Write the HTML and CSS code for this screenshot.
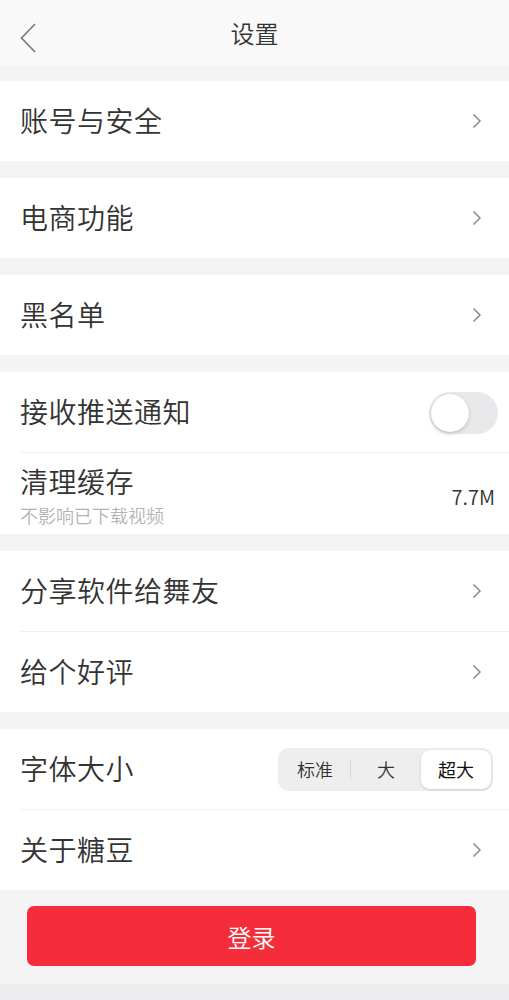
FILE: index.html
```html
<!DOCTYPE html>
<html lang="zh-CN">

<head>
    <meta charset="UTF-8">
    <meta name="viewport" content="width=device-width, initial-scale=1.0">
    <title>设置</title>
    <link rel="stylesheet" href="styles.css">
</head>

<body>
    <header class="top-bar">
        <span class="back-btn">
            <svg width="16" height="30" viewBox="0 0 16 30">
                <polyline points="15,1 1.5,15 15,29" fill="none" stroke="#777" stroke-width="1.6" />
            </svg>
        </span>
        <h1>设置</h1>
    </header>

    <div class="group first">
        <div class="row">
            <span class="label">账号与安全</span>
            <svg class="arrow" width="10" height="16" viewBox="0 0 10 16">
                <polyline points="1.5,1.5 8,8 1.5,14.5" fill="none" stroke="#8a8a8a" stroke-width="1.5" />
            </svg>
        </div>
    </div>

    <div class="group">
        <div class="row">
            <span class="label">电商功能</span>
            <svg class="arrow" width="10" height="16" viewBox="0 0 10 16">
                <polyline points="1.5,1.5 8,8 1.5,14.5" fill="none" stroke="#8a8a8a" stroke-width="1.5" />
            </svg>
        </div>
    </div>

    <div class="group">
        <div class="row">
            <span class="label">黑名单</span>
            <svg class="arrow" width="10" height="16" viewBox="0 0 10 16">
                <polyline points="1.5,1.5 8,8 1.5,14.5" fill="none" stroke="#8a8a8a" stroke-width="1.5" />
            </svg>
        </div>
    </div>

    <div class="group">
        <div class="row">
            <span class="label">接收推送通知</span>
            <span class="switch"><span class="knob"></span></span>
        </div>
        <div class="row row-cache">
            <div class="cache-label">
                <div class="label">清理缓存</div>
                <div class="sub">不影响已下载视频</div>
            </div>
            <span class="value">7.7M</span>
        </div>
    </div>

    <div class="group">
        <div class="row">
            <span class="label">分享软件给舞友</span>
            <svg class="arrow" width="10" height="16" viewBox="0 0 10 16">
                <polyline points="1.5,1.5 8,8 1.5,14.5" fill="none" stroke="#8a8a8a" stroke-width="1.5" />
            </svg>
        </div>
        <div class="row">
            <span class="label">给个好评</span>
            <svg class="arrow" width="10" height="16" viewBox="0 0 10 16">
                <polyline points="1.5,1.5 8,8 1.5,14.5" fill="none" stroke="#8a8a8a" stroke-width="1.5" />
            </svg>
        </div>
    </div>

    <div class="group">
        <div class="row">
            <span class="label">字体大小</span>
            <div class="segment">
                <span class="seg-item">标准</span>
                <span class="seg-line"></span>
                <span class="seg-item">大</span>
                <span class="seg-item active">超大</span>
            </div>
        </div>
        <div class="row">
            <span class="label">关于糖豆</span>
            <svg class="arrow" width="10" height="16" viewBox="0 0 10 16">
                <polyline points="1.5,1.5 8,8 1.5,14.5" fill="none" stroke="#8a8a8a" stroke-width="1.5" />
            </svg>
        </div>
    </div>

    <div class="footer">
        <button class="login-btn">登录</button>
    </div>
    <div class="home-bar"></div>
</body>

</html>
```

FILE: styles.css
```css
body {
    margin: 0;
    padding: 0;
    background-color: #f4f4f4;
    font-family: "Noto Sans CJK SC", "Noto Sans", sans-serif;
    color: #333;
}

.top-bar {
    height: 66px;
    background-color: #f9f9f9;
    display: flex;
    align-items: center;
    justify-content: center;
    position: relative;
}

.top-bar h1 {
    margin: 0;
    font-size: 24px;
    font-weight: 350;
    color: #333;
    line-height: 30px;
}

.back-btn {
    position: absolute;
    left: 20px;
    top: 23px;
    width: 16px;
    height: 30px;
}

.back-btn svg {
    display: block;
}

.group {
    background-color: #fff;
    margin-top: 17px;
}

.group.first {
    margin-top: 15px;
}

.row {
    height: 80px;
    display: flex;
    align-items: center;
    justify-content: space-between;
    padding: 0 27px 0 20px;
    position: relative;
}

.row + .row {
    border-top: 1px solid #f1f1f1;
    margin-left: 20px;
    padding-left: 0;
}

.label {
    font-size: 28px;
    font-weight: 350;
    line-height: 32px;
    color: #333;
    letter-spacing: 0.5px;
    margin-top: -2px;
}

.arrow {
    display: block;
}

/* switch */
.switch {
    width: 69px;
    height: 42px;
    border-radius: 21px;
    background-color: #e9e9eb;
    position: relative;
    margin-right: -16px;
    margin-top: 2px;
}

.knob {
    position: absolute;
    left: 2px;
    top: 2px;
    width: 38px;
    height: 38px;
    border-radius: 50%;
    background-color: #fff;
    box-shadow: 0 2px 4px rgba(0, 0, 0, 0.15), 0 0 1px rgba(0, 0, 0, 0.15);
}

/* cache */
.row-cache {
    height: 81px;
}

.cache-label {
    margin-top: 5px;
}

.cache-label .label {
    line-height: 30px;
    margin-top: 0;
}

.cache-label .sub {
    margin-top: 8px;
    font-size: 18px;
    font-weight: 350;
    line-height: 22px;
    color: #b3b3b3;
}

.value {
    font-size: 20px;
    font-weight: 350;
    margin-right: -13px;
    margin-top: 6px;
    color: #333;
}

/* font size segment */
.segment {
    width: 215px;
    height: 43px;
    box-sizing: border-box;
    padding: 2px;
    border-radius: 11px;
    background-color: #eeeeef;
    display: flex;
    align-items: center;
    margin-right: -11px;
}

.seg-item {
    flex: 1;
    height: 39px;
    display: flex;
    align-items: center;
    justify-content: center;
    font-size: 18px;
    font-weight: 350;
    color: #333;
    border-radius: 9px;
}

.seg-line {
    width: 1px;
    height: 20px;
    background-color: #d6d6d8;
}

.seg-item.active {
    background-color: #fff;
    font-weight: 400;
    color: #111;
    box-shadow: 0 1px 3px rgba(0, 0, 0, 0.15);
}

/* footer */
.footer {
    padding: 16px 33px 18px 27px;
}

.login-btn {
    display: block;
    width: 100%;
    height: 60px;
    border: none;
    border-radius: 7px;
    background-color: #f52d3b;
    color: #fff;
    font-family: inherit;
    font-size: 24px;
    font-weight: 350;
}

.home-bar {
    height: 18px;
    background-color: #ececee;
}
```
